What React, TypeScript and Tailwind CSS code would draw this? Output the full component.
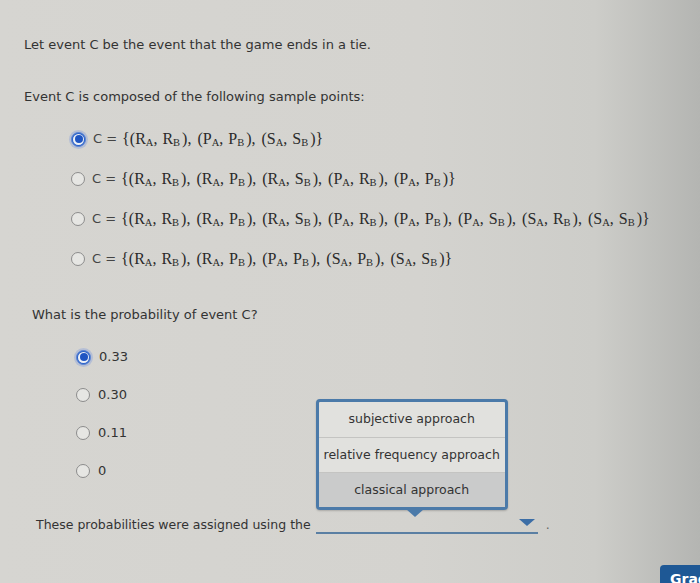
import React from "react";

const sans = { fontFamily: '"DejaVu Sans", Verdana, sans-serif' };

function Radio({ checked }: { checked?: boolean }) {
  if (checked) {
    return (
      <span className="w-[15px] h-[15px] rounded-full bg-[#2d63c8] border-[1px] border-[#5c86d4] flex items-center justify-center shrink-0 shadow-[0_0_0_2px_rgba(120,150,220,0.35)]">
        <span className="w-[11px] h-[11px] rounded-full bg-[#eef1f6] flex items-center justify-center">
          <span className="w-[8px] h-[8px] rounded-full bg-[#1f55c2]" />
        </span>
      </span>
    );
  }
  return <span className="w-[14px] h-[14px] rounded-full border-[1.5px] border-[#8c8c8c] bg-[#e6e6e3] shrink-0" />;
}

function Sub({ c }: { c: string }) {
  return <span className="relative top-[2px] text-[10.5px] leading-none">{c}</span>;
}

function Pair({ a, b }: { a: string; b: string }) {
  return (
    <span>
      (<span>{a[0]}</span>
      <Sub c={a[1]} />
      <span className="mr-[5px]">,</span>
      <span>{b[0]}</span>
      <Sub c={b[1]} />
      <span className="ml-[2px]">)</span>
    </span>
  );
}

function SetExpr({ pairs }: { pairs: [string, string][] }) {
  return (
    <span className="text-[16px] text-[#2a2a2a]" style={{ fontFamily: '"Liberation Serif", "Times New Roman", serif' }}>
      {"{"}
      {pairs.map((p, i) => (
        <span key={i}>
          <Pair a={p[0]} b={p[1]} />
          {i < pairs.length - 1 ? <span className="mr-[6px]">,</span> : null}
        </span>
      ))}
      {"}"}
    </span>
  );
}

const options: [string, string][][] = [
  [["RA", "RB"], ["PA", "PB"], ["SA", "SB"]],
  [["RA", "RB"], ["RA", "PB"], ["RA", "SB"], ["PA", "RB"], ["PA", "PB"]],
  [["RA", "RB"], ["RA", "PB"], ["RA", "SB"], ["PA", "RB"], ["PA", "PB"], ["PA", "SB"], ["SA", "RB"], ["SA", "SB"]],
  [["RA", "RB"], ["RA", "PB"], ["PA", "PB"], ["SA", "PB"], ["SA", "SB"]],
];

const probs = ["0.33", "0.30", "0.11", "0"];

export default function App() {
  return (
    <div
      className="w-[700px] h-[583px] overflow-hidden text-[13px] text-[#333] bg-[linear-gradient(90deg,#d6d5d1_0%,#d4d3cf_60%,#cdcdc9_85%,#b4b5b2_100%)]"
      style={sans}
    >
      <div className="flex flex-col pt-[36px]">
        <div className="h-[18px] flex items-center pl-[24px]">Let event C be the event that the game ends in a tie.</div>
        <div className="h-[18px] flex items-center pl-[24px] mt-[34px]">Event C is composed of the following sample points:</div>

        <div className="flex flex-col mt-[13px] pl-[71px]">
          {options.map((o, i) => (
            <div key={i} className="h-[40px] flex items-center gap-[7px]">
              <Radio checked={i === 0} />
              <span className="flex items-center gap-[5px] whitespace-nowrap">
                <span className="text-[#444]">C =</span>
                <SetExpr pairs={o} />
              </span>
            </div>
          ))}
        </div>

        <div className="h-[18px] flex items-center pl-[32px] mt-[27px]">What is the probability of event C?</div>

        <div className="flex flex-col mt-[14px] pl-[76px]">
          {probs.map((p, i) => (
            <div key={i} className="h-[38px] flex items-center gap-[8px]">
              <Radio checked={i === 0} />
              <span>{p}</span>
            </div>
          ))}
        </div>

        <div className="h-[18px] flex items-center pl-[36px] mt-[26px] whitespace-nowrap text-[12.5px]">
          <span>These probabilities were assigned using the</span>
          <span className="relative ml-[5px] w-[222px] h-[18px] border-b-[2px] border-[#5a7fa3]">
            <span className="absolute right-[3px] top-[3px] w-0 h-0 border-l-[8px] border-r-[8px] border-t-[7px] border-l-transparent border-r-transparent border-t-[#3c6ea6]" />
            <div className="absolute left-0 bottom-[22px] w-[192px] rounded-[4px] border-[3px] border-[#4b7aa9] bg-[#e1e1de] flex flex-col shadow-[0_1px_2px_rgba(0,0,0,0.2)] text-[12.5px]">
              <div className="h-[36px] flex items-center justify-center border-b border-[#c4c4c2]">subjective approach</div>
              <div className="h-[35px] flex items-center justify-center border-b border-[#c4c4c2]">relative frequency approach</div>
              <div className="h-[34px] flex items-center justify-center bg-[#cacbcb]">classical approach</div>
              <span className="absolute left-[87px] -bottom-[10px] w-0 h-0 border-l-[9px] border-r-[9px] border-t-[8px] border-l-transparent border-r-transparent border-t-[#4b7aa9]" />
            </div>
          </span>
          <span className="ml-[8px] text-[#666]">.</span>
        </div>

        <div className="flex justify-end mt-[31px]">
          <div className="w-[80px] h-[30px] mr-[-40px] rounded-[4px] bg-[#1e5895] text-white font-bold text-[14px] pl-[10px] pt-[4px]">Grade</div>
        </div>
      </div>
    </div>
  );
}
